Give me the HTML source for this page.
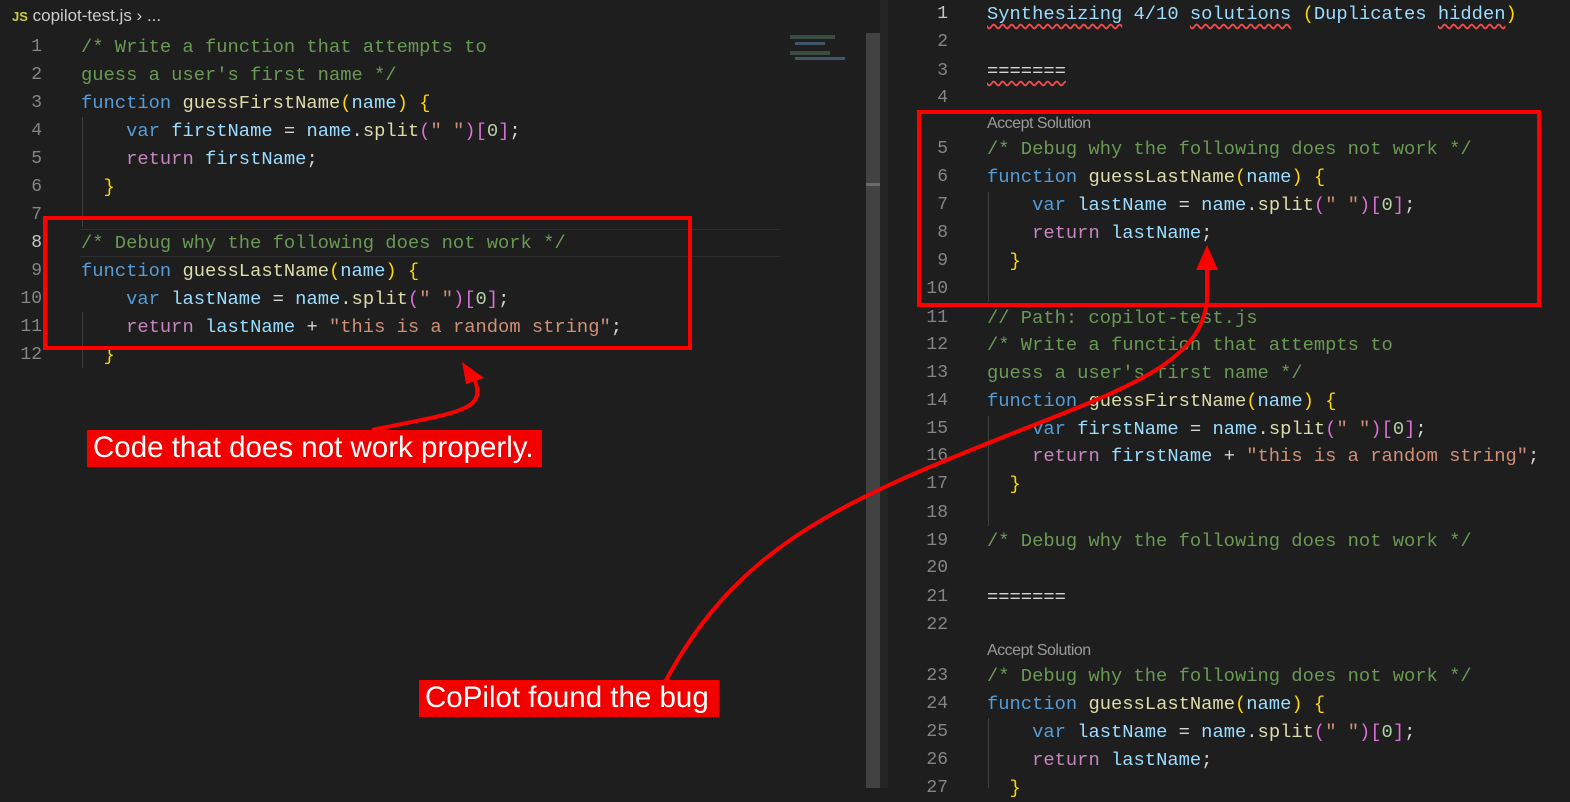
<!DOCTYPE html>
<html><head><meta charset="utf-8"><style>
*{margin:0;padding:0;box-sizing:border-box}
body{width:1570px;height:788px;background:#1e1e1e;position:relative;overflow:hidden;font-family:"Liberation Mono",monospace}
.l{position:absolute;height:28px;line-height:28px;font-size:18.8px;white-space:pre;color:#d4d4d4}
.n{position:absolute;height:28px;line-height:28px;font-size:18px;color:#858585;text-align:right;width:40px}
.c{color:#6a9955}.k{color:#569cd6}.f{color:#dcdcaa}.p{color:#9cdcfe}.y{color:#ffd700}.r{color:#c586c0}.s{color:#ce9178}.m{color:#da70d6}.num{color:#b5cea8}
.acc{position:absolute;font-family:"Liberation Sans",sans-serif;font-size:16px;color:#9a9a9a;letter-spacing:-0.5px}
.box{position:absolute;border:4px solid #f00}
.lab{position:absolute;background:#f20000;color:#fff;font-family:"Liberation Sans",sans-serif;font-size:29.5px;padding:0 6px;line-height:36px;height:37px;white-space:nowrap}
.g{position:absolute;width:1px;background:#404040}
.sq{text-decoration:underline wavy #f14c4c;text-underline-offset:4px}
</style></head><body>
<div style="position:absolute;left:12px;top:6px;font-family:'Liberation Sans',sans-serif;font-size:17px;color:#ccc"><span style="color:#cbcb41;font-weight:bold;font-size:13px">JS</span> copilot-test.js › ...</div>
<div style="position:absolute;left:790px;top:35px;width:45px;height:4px;background:#4a6a5a;opacity:.6"></div>
<div style="position:absolute;left:795px;top:42px;width:30px;height:3px;background:#5a7a9a;opacity:.6"></div>
<div style="position:absolute;left:790px;top:51px;width:40px;height:4px;background:#4a6a5a;opacity:.6"></div>
<div style="position:absolute;left:795px;top:57px;width:50px;height:3px;background:#5a7a9a;opacity:.6"></div>
<div style="position:absolute;left:866px;top:33px;width:14px;height:755px;background:#424242"></div>
<div style="position:absolute;left:866px;top:183px;width:14px;height:3px;background:#6a6a6a"></div>
<div style="position:absolute;left:880px;top:0;width:8px;height:788px;background:#252526"></div>
<div style="position:absolute;left:80px;top:229px;width:700px;height:1px;background:#2e2e2e"></div>
<div style="position:absolute;left:80px;top:256px;width:700px;height:1px;background:#2e2e2e"></div>

<div class="g" style="left:82px;top:117px;height:110px"></div>
<div class="g" style="left:82px;top:312px;height:56px"></div>

<div class="n" style="left:2px;top:33px">1</div>
<div class="n" style="left:2px;top:61px">2</div>
<div class="n" style="left:2px;top:89px">3</div>
<div class="n" style="left:2px;top:117px">4</div>
<div class="n" style="left:2px;top:145px">5</div>
<div class="n" style="left:2px;top:173px">6</div>
<div class="n" style="left:2px;top:201px">7</div>
<div class="n" style="left:2px;top:229px;color:#c6c6c6">8</div>
<div class="n" style="left:2px;top:257px">9</div>
<div class="n" style="left:2px;top:285px">10</div>
<div class="n" style="left:2px;top:313px">11</div>
<div class="n" style="left:2px;top:341px">12</div>

<div class="l c" style="left:81px;top:33px">/* Write a function that attempts to</div>
<div class="l c" style="left:81px;top:61px">guess a user's first name */</div>
<div class="l" style="left:81px;top:89px"><span class="k">function</span> <span class="f">guessFirstName</span><span class="y">(</span><span class="p">name</span><span class="y">)</span> <span class="y">{</span></div>
<div class="l" style="left:81px;top:117px">    <span class="k">var</span> <span class="p">firstName</span> = <span class="p">name</span>.<span class="f">split</span><span class="m">(</span><span class="s">" "</span><span class="m">)[</span><span class="num">0</span><span class="m">]</span>;</div>
<div class="l" style="left:81px;top:145px">    <span class="r">return</span> <span class="p">firstName</span>;</div>
<div class="l" style="left:81px;top:173px">  <span class="y">}</span></div>
<div class="l c" style="left:81px;top:229px">/* Debug why the following does not work */</div>
<div class="l" style="left:81px;top:257px"><span class="k">function</span> <span class="f">guessLastName</span><span class="y">(</span><span class="p">name</span><span class="y">)</span> <span class="y">{</span></div>
<div class="l" style="left:81px;top:285px">    <span class="k">var</span> <span class="p">lastName</span> = <span class="p">name</span>.<span class="f">split</span><span class="m">(</span><span class="s">" "</span><span class="m">)[</span><span class="num">0</span><span class="m">]</span>;</div>
<div class="l" style="left:81px;top:313px">    <span class="r">return</span> <span class="p">lastName</span> + <span class="s">"this is a random string"</span>;</div>
<div class="l" style="left:81px;top:341px">  <span class="y">}</span></div>

<div class="g" style="left:988px;top:192px;height:110px"></div>
<div class="g" style="left:988px;top:416px;height:110px"></div>
<div class="g" style="left:988px;top:718px;height:70px"></div>

<div class="n" style="left:908px;top:0px;color:#c6c6c6">1</div>
<div class="n" style="left:908px;top:28px">2</div>
<div class="n" style="left:908px;top:57px">3</div>
<div class="n" style="left:908px;top:84px">4</div>
<div class="n" style="left:908px;top:135px">5</div>
<div class="n" style="left:908px;top:163px">6</div>
<div class="n" style="left:908px;top:191px">7</div>
<div class="n" style="left:908px;top:219px">8</div>
<div class="n" style="left:908px;top:247px">9</div>
<div class="n" style="left:908px;top:275px">10</div>
<div class="n" style="left:908px;top:304px">11</div>
<div class="n" style="left:908px;top:331px">12</div>
<div class="n" style="left:908px;top:359px">13</div>
<div class="n" style="left:908px;top:387px">14</div>
<div class="n" style="left:908px;top:415px">15</div>
<div class="n" style="left:908px;top:442px">16</div>
<div class="n" style="left:908px;top:470px">17</div>
<div class="n" style="left:908px;top:499px">18</div>
<div class="n" style="left:908px;top:527px">19</div>
<div class="n" style="left:908px;top:554px">20</div>
<div class="n" style="left:908px;top:583px">21</div>
<div class="n" style="left:908px;top:611px">22</div>
<div class="n" style="left:908px;top:662px">23</div>
<div class="n" style="left:908px;top:690px">24</div>
<div class="n" style="left:908px;top:718px">25</div>
<div class="n" style="left:908px;top:746px">26</div>
<div class="n" style="left:908px;top:774px">27</div>

<div class="l" style="left:987px;top:0px"><span class="p sq">Synthesizing</span><span class="p"> 4/10 </span><span class="p sq">solutions</span> <span class="y">(</span><span class="p">Duplicates </span><span class="p sq">hidden</span><span class="y">)</span></div>
<div class="l" style="left:987px;top:57px"><span class="sq">=======</span></div>
<div class="acc" style="left:987px;top:115px">Accept Solution</div>
<div class="l c" style="left:987px;top:135px">/* Debug why the following does not work */</div>
<div class="l" style="left:987px;top:163px"><span class="k">function</span> <span class="f">guessLastName</span><span class="y">(</span><span class="p">name</span><span class="y">)</span> <span class="y">{</span></div>
<div class="l" style="left:987px;top:191px">    <span class="k">var</span> <span class="p">lastName</span> = <span class="p">name</span>.<span class="f">split</span><span class="m">(</span><span class="s">" "</span><span class="m">)[</span><span class="num">0</span><span class="m">]</span>;</div>
<div class="l" style="left:987px;top:219px">    <span class="r">return</span> <span class="p">lastName</span>;</div>
<div class="l" style="left:987px;top:247px">  <span class="y">}</span></div>
<div class="l c" style="left:987px;top:304px">// Path: copilot-test.js</div>
<div class="l c" style="left:987px;top:331px">/* Write a function that attempts to</div>
<div class="l c" style="left:987px;top:359px">guess a user's first name */</div>
<div class="l" style="left:987px;top:387px"><span class="k">function</span> <span class="f">guessFirstName</span><span class="y">(</span><span class="p">name</span><span class="y">)</span> <span class="y">{</span></div>
<div class="l" style="left:987px;top:415px">    <span class="k">var</span> <span class="p">firstName</span> = <span class="p">name</span>.<span class="f">split</span><span class="m">(</span><span class="s">" "</span><span class="m">)[</span><span class="num">0</span><span class="m">]</span>;</div>
<div class="l" style="left:987px;top:442px">    <span class="r">return</span> <span class="p">firstName</span> + <span class="s">"this is a random string"</span>;</div>
<div class="l" style="left:987px;top:470px">  <span class="y">}</span></div>
<div class="l c" style="left:987px;top:527px">/* Debug why the following does not work */</div>
<div class="l" style="left:987px;top:583px">=======</div>
<div class="acc" style="left:987px;top:642px">Accept Solution</div>
<div class="l c" style="left:987px;top:662px">/* Debug why the following does not work */</div>
<div class="l" style="left:987px;top:690px"><span class="k">function</span> <span class="f">guessLastName</span><span class="y">(</span><span class="p">name</span><span class="y">)</span> <span class="y">{</span></div>
<div class="l" style="left:987px;top:718px">    <span class="k">var</span> <span class="p">lastName</span> = <span class="p">name</span>.<span class="f">split</span><span class="m">(</span><span class="s">" "</span><span class="m">)[</span><span class="num">0</span><span class="m">]</span>;</div>
<div class="l" style="left:987px;top:746px">    <span class="r">return</span> <span class="p">lastName</span>;</div>
<div class="l" style="left:987px;top:774px">  <span class="y">}</span></div>

<div class="box" style="left:43px;top:216px;width:649px;height:134px"></div>
<div class="box" style="left:917px;top:110px;width:624px;height:197px"></div>

<svg width="1570" height="788" style="position:absolute;left:0;top:0">
<path d="M372,430 C420,420 455,415 470,405 C480,398 478,388 474,378" fill="none" stroke="#f00" stroke-width="4"/>
<polygon points="462,362 484,378 466,384" fill="#f00"/>
<path d="M665,682 C720,580 790,530 900,480 C1080,400 1200,380 1207,300 L1207,268" fill="none" stroke="#f00" stroke-width="4"/>
<polygon points="1207,245 1196,270 1218,270" fill="#f00"/>
</svg>

<div class="lab" style="left:87px;top:430px;width:455px">Code that does not work properly.</div>
<div class="lab" style="left:419px;top:680px;width:300px">CoPilot found the bug</div>
</body></html>
